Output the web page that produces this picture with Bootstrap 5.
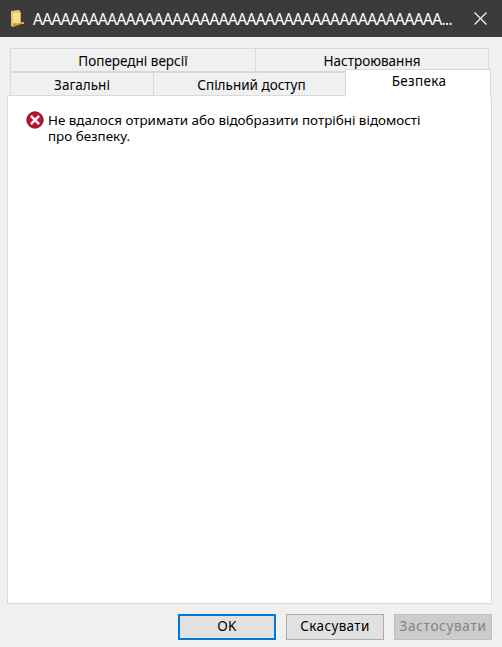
<!DOCTYPE html>
<html lang="uk">
<head>
<meta charset="utf-8">
<title>Властивості</title>
<link href="https://cdn.jsdelivr.net/npm/bootstrap@5.3.0/dist/css/bootstrap.min.css" rel="stylesheet">
<style>
html,body{height:647px;overflow:hidden}
body{background:#f0f0f0;font-family:"Noto Sans","Open Sans",sans-serif;font-size:13.5px;color:#000;line-height:1.2}
.titlebar{height:37px;background:#3b3b3b;color:#fff;padding-left:11px}
.titletext{font-size:15.5px;letter-spacing:-.62px;margin-left:9px;line-height:20px;white-space:nowrap}
.closex{margin-left:auto;margin-right:15px;margin-top:-1px}
.tabarea{padding:11px 10px 0 7px}
.tabrow{margin-left:3px}
.tabitem{background:#f0f0f0;border:1px solid #d9d9d9;margin-right:-1px;display:flex;align-items:center;justify-content:center;height:24px;padding-top:2px}
.w1{width:246px}.w2{width:234px}.w3{width:144px}.w4{width:193px;padding-left:4px}
.lower{margin-top:-1px;height:25px;align-items:flex-end}
.tabactive{background:#fff;border:1px solid #d9d9d9;border-bottom:0;width:146px;height:28px;position:relative;z-index:2;display:flex;align-items:center;justify-content:center;padding-bottom:4px;margin-bottom:-1px;padding-left:2px;letter-spacing:.3px}
.panel{background:#fff;border:1px solid #d9d9d9;height:509px;width:485px;margin-top:-1px;position:relative;z-index:1;padding:15px 18px}
.msgtext{margin-left:4px;line-height:16px;margin-top:1px;width:395px;font-size:13.4px}
.footbar{padding:10px 9px 0 178px;gap:10px}
.wbtn{width:98px;height:26px;background:#e1e1e1;border:1px solid #adadad;border-radius:0;padding:0;font-size:13.5px;color:#000;line-height:1;letter-spacing:.35px}
.wbtn:hover{background:#e1e1e1;color:#000;border-color:#adadad}
.wbtn-default{border:2px solid #0078d7}
.wbtn-default:hover{border-color:#0078d7}
.wbtn:disabled{background:#ccc;border-color:#bfbfbf;color:#838383;opacity:1;letter-spacing:.7px}
</style>
</head>
<body>
<div class="titlebar d-flex align-items-center">
  <svg width="13" height="17" viewBox="0 0 13 17" class="flex-shrink-0"><path d="M0 1 L8 0 L9 1 V13 L2 17 L0 16Z" fill="#eac663"/><path d="M2 3 H10 V14 H2Z" fill="#f8de8a"/><path d="M2 14 H13 V12 H10 V2 H9 V13 H2Z" fill="#d9a93c"/><path d="M2 14 H11 L2 17Z" fill="#c89a34"/></svg>
  <div class="titletext">AAAAAAAAAAAAAAAAAAAAAAAAAAAAAAAAAAAAAAAAAAAA...</div>
  <svg class="closex" width="13" height="13" viewBox="0 0 13 13"><path d="M0.5 0.5 L12.5 12.5 M12.5 0.5 L0.5 12.5" stroke="#fff" stroke-width="1.1" fill="none"/></svg>
</div>
<div class="tabarea">
  <div class="tabrow d-flex">
    <div class="tabitem w1">Попередні версії</div>
    <div class="tabitem w2">Настроювання</div>
  </div>
  <div class="tabrow lower d-flex">
    <div class="tabitem w3">Загальні</div>
    <div class="tabitem w4">Спільний доступ</div>
    <div class="tabactive">Безпека</div>
  </div>
  <div class="panel d-flex align-items-start">
    <svg width="18" height="18" viewBox="0 0 18 18" class="flex-shrink-0"><circle cx="9" cy="9" r="8.2" fill="#bd1230" stroke="#7e0f22" stroke-width="0.9"/><path d="M4.9 4.9 L13.1 13.1 M13.1 4.9 L4.9 13.1" stroke="#fff" stroke-width="2.4" fill="none"/></svg>
    <div class="msgtext">Не вдалося отримати або відобразити потрібні відомості про безпеку.</div>
  </div>
</div>
<div class="footbar d-flex">
  <button type="button" class="btn wbtn wbtn-default">OK</button>
  <button type="button" class="btn wbtn">Скасувати</button>
  <button type="button" class="btn wbtn" disabled>Застосувати</button>
</div>
<script src="https://cdn.jsdelivr.net/npm/bootstrap@5.3.0/dist/js/bootstrap.bundle.min.js"></script>
</body>
</html>
